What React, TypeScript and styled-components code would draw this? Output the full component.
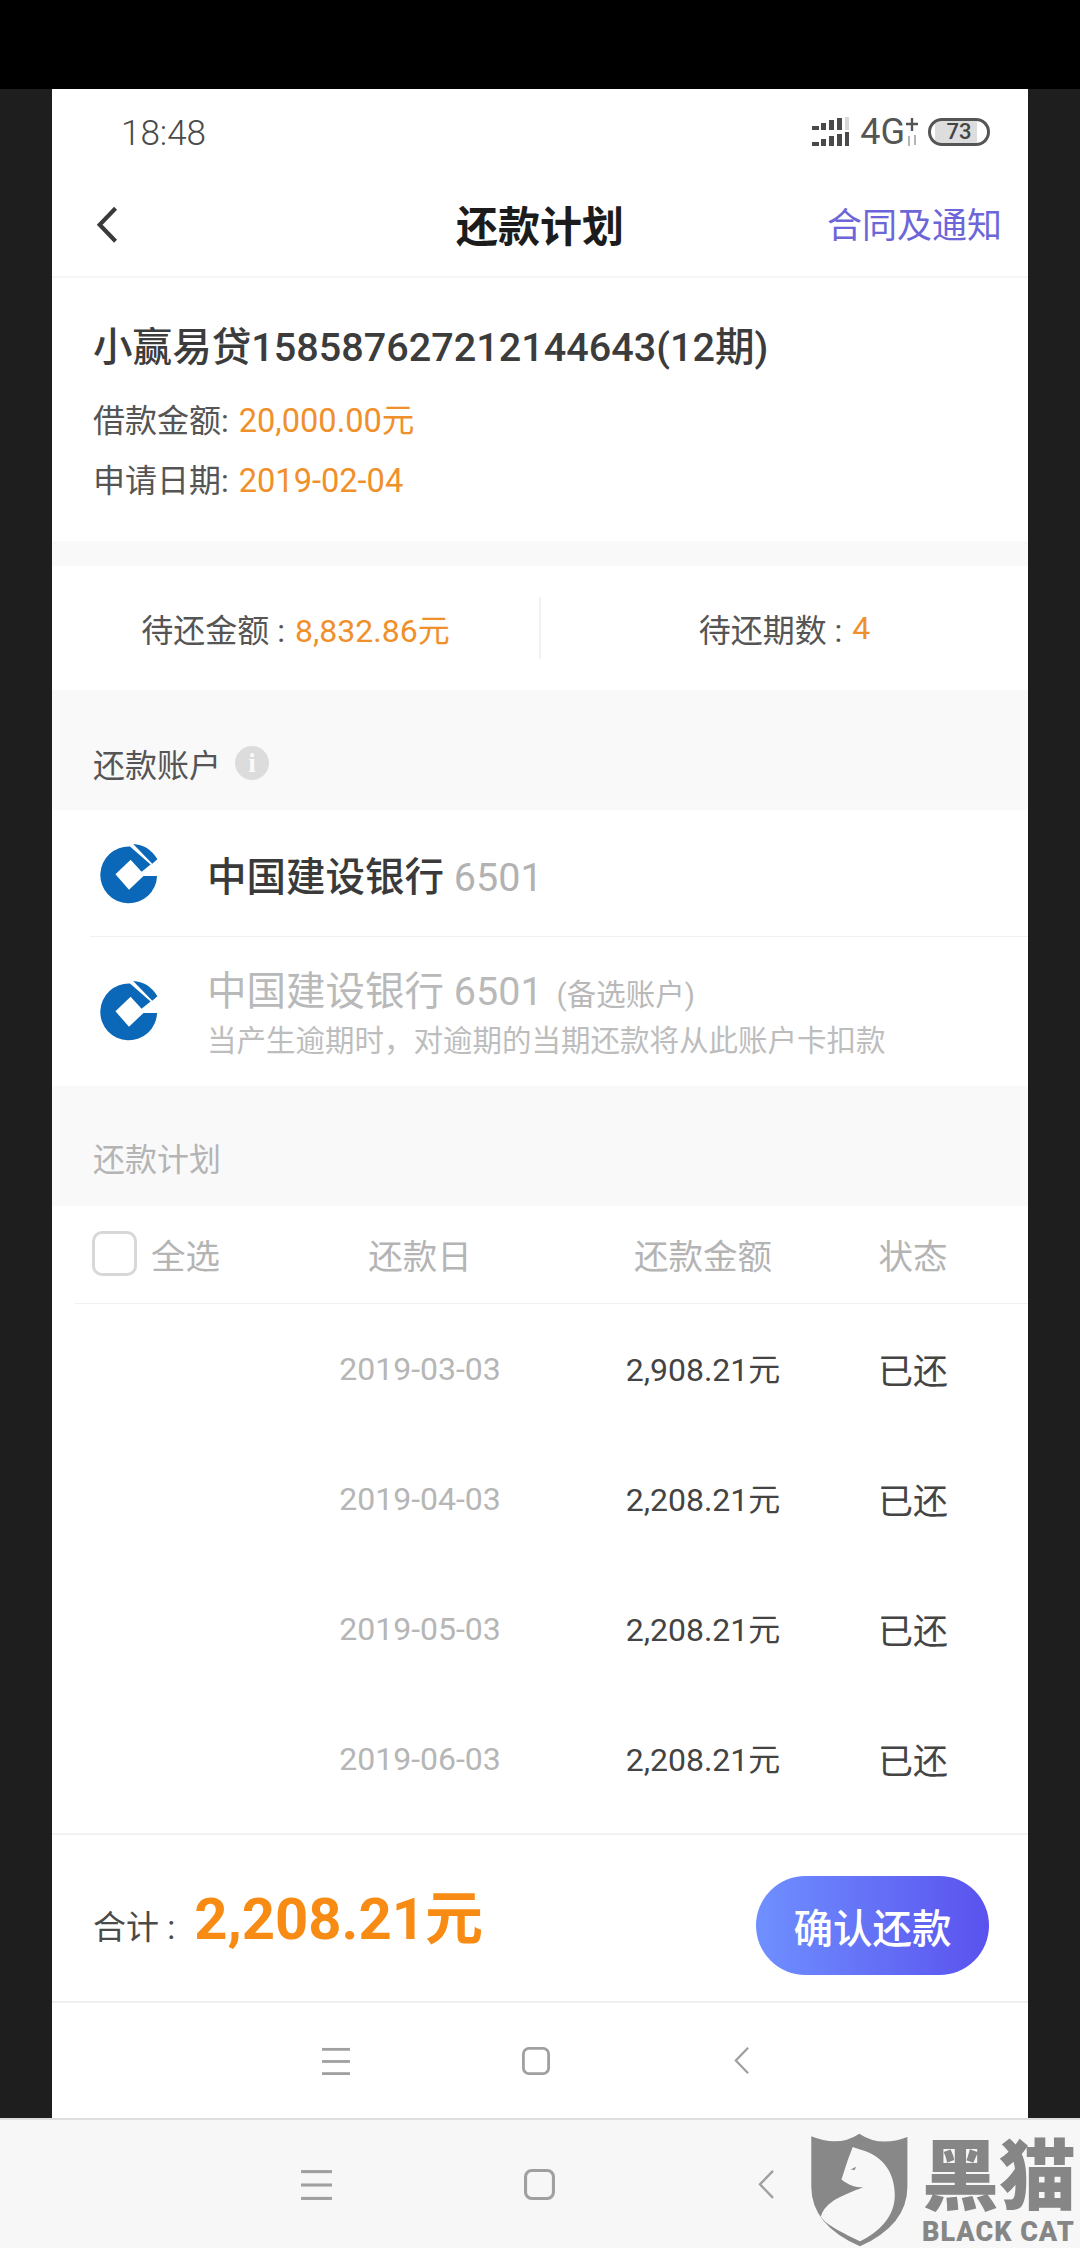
import React from "react";
import styled, { createGlobalStyle } from "styled-components";

const GlobalStyle = createGlobalStyle`
  html, body {
    margin: 0;
    padding: 0;
    background: #000000;
  }
  * {
    box-sizing: border-box;
  }
  body {
    font-family: Roboto, "Noto Sans CJK SC", sans-serif;
  }
`;

const Page = styled.div`
  width: 1080px;
  height: 2248px;
  position: relative;
  overflow: hidden;
  display: flex;
  flex-direction: column;
`;

const TopBlack = styled.div`
  height: 89px;
  background: #000000;
`;

const Middle = styled.div`
  height: 2029px;
  display: flex;
  background: #1e1e1e;
  padding: 0 52px;
`;

const Screen = styled.div`
  width: 976px;
  background: #ffffff;
  display: flex;
  flex-direction: column;
`;

const StatusBar = styled.div`
  height: 86px;
  padding: 0 38px 0 69px;
  display: flex;
  align-items: center;
  justify-content: space-between;
  color: #4a4a4a;
`;

const Time = styled.span`
  font-size: 35px;
  font-weight: 300;
  margin-top: 3px;
`;

const StatusIcons = styled.div`
  display: flex;
  align-items: center;
`;

const Net = styled.span`
  font-size: 36px;
  font-weight: 400;
  margin-left: 10px;
  color: #555555;
`;

const Battery = styled.span`
  width: 62px;
  height: 28px;
  margin-left: 9px;
  border: 3px solid #555555;
  border-radius: 14px;
  font-size: 22px;
  font-weight: 500;
  line-height: 22px;
  text-align: center;
  color: #444444;
  background: linear-gradient(90deg, #ffffff 8%, #dddddd 8%, #dddddd 82%, #ffffff 82%);
`;

const NavBar = styled.div`
  height: 103px;
  position: relative;
  display: flex;
  align-items: center;
  justify-content: center;
  padding-bottom: 5px;
  border-bottom: 2px solid #f6f6f6;
`;

const BackButton = styled.div`
  position: absolute;
  left: 44px;
  top: 31px;
  display: flex;
`;

const NavTitle = styled.h1`
  margin: 0;
  font-size: 42px;
  font-weight: 700;
  color: #1c1c1c;
`;

const NavLink = styled.a`
  position: absolute;
  right: 26px;
  top: 22px;
  font-size: 35px;
  color: #6d66d9;
`;

const LoanCard = styled.div`
  height: 263px;
  padding: 44px 41px 0;
  display: flex;
  flex-direction: column;
`;

const LoanTitle = styled.div`
  font-size: 39.6px;
  font-weight: 500;
  line-height: 52px;
  color: #3c3c3c;
  margin-bottom: 17px;
`;

const LoanLine = styled.div`
  font-size: 32px;
  line-height: 60px;
  color: #555555;
`;

const Orange = styled.span`
  font-size: 32.6px;
  margin-left: 2px;
  color: #f0902a;
`;

const StatValue = styled(Orange)`
  font-size: 32px;
  margin-left: 10px;
`;

const Stats = styled.div`
  height: 124px;
  display: flex;
  align-items: center;
`;

const Stat = styled.div<{ $bordered?: boolean }>`
  flex: 1;
  height: 62px;
  display: flex;
  align-items: center;
  justify-content: center;
  font-size: 32px;
  color: #555555;
  border-right: ${(p) => (p.$bordered ? "2px solid #f2f2f2" : "none")};
`;

const GreyBand = styled.div<{ $height: number; $muted?: boolean; $pad?: number }>`
  height: ${(p) => p.$height}px;
  background: #f9f9f9;
  padding: 0 0 ${(p) => p.$pad ?? 0}px 41px;
  display: flex;
  align-items: flex-end;
  font-size: 32px;
  color: ${(p) => (p.$muted ? "#b4b4b4" : "#555555")};
`;

const BandLabel = styled.div`
  display: flex;
  align-items: center;
  height: 72px;
  gap: 14px;
`;

const InfoDot = styled.span`
  width: 34px;
  height: 34px;
  border-radius: 50%;
  background: #dcdcdc;
  color: #fafafa;
  font-size: 27px;
  font-weight: 700;
  font-family: "Liberation Serif", serif;
  text-align: center;
  line-height: 34px;
`;

const AccountRow = styled.div<{ $height: number; $pad?: number }>`
  height: ${(p) => p.$height}px;
  display: flex;
  align-items: center;
  padding: 0 0 ${(p) => p.$pad ?? 0}px 47px;
  gap: 48px;
`;

const AccountName = styled.div`
  font-size: 39.5px;
  font-weight: 500;
  color: #3a3a3a;
`;

const AccountNo = styled.span`
  font-weight: 400;
  color: #b2b2b2;
`;

const AccountText = styled.div`
  display: flex;
  flex-direction: column;
  margin-top: 10px;
`;

const AltName = styled.div`
  font-size: 39.5px;
  line-height: 50px;
  color: #b9b9b9;
`;

const AltTag = styled.span`
  font-size: 29.5px;
  margin-left: 14px;
`;

const AltNote = styled.div`
  font-size: 29.5px;
  line-height: 42px;
  color: #bdbdbd;
`;

const Separator = styled.div`
  height: 1px;
  margin-left: 38px;
  background: #f0f0f0;
`;

const Grid = styled.div`
  display: grid;
  grid-template-columns: 255px 226px 340px 80px 75px;
  align-items: center;
  justify-items: center;
  white-space: nowrap;
`;

const TableHead = styled(Grid)`
  height: 98px;
  margin-left: 23px;
  padding-bottom: 3px;
  grid-template-columns: 232px 226px 340px 80px 75px;
  font-size: 34.5px;
  color: #b4b4b4;
  box-shadow: inset 0 -1px 0 #f0f0f0;
`;

const SelectAll = styled.label`
  justify-self: start;
  display: flex;
  align-items: center;
  gap: 14px;
  padding-left: 17px;
`;

const CheckBox = styled.span`
  width: 45px;
  height: 45px;
  border: 3px solid #d8d8d8;
  border-radius: 10px;
`;

const TableBody = styled.div`
  height: 531px;
  display: flex;
  flex-direction: column;
  padding-bottom: 8px;
  border-bottom: 2px solid #f2f2f2;
`;

const PlanRow = styled(Grid)`
  height: 130px;
  font-size: 32px;
`;

const DateCell = styled.span`
  grid-column: 2;
  color: #b6b6b6;
`;

const AmountCell = styled.span`
  color: #444444;
  padding-bottom: 4px;
`;

const StateCell = styled.span`
  font-size: 35px;
  color: #444444;
  padding-bottom: 2px;
`;

const Footer = styled.div`
  height: 168px;
  padding: 0 39px 8px 41px;
  display: flex;
  align-items: center;
  justify-content: space-between;
  border-bottom: 2px solid #efefef;
`;

const Total = styled.div`
  display: flex;
  align-items: baseline;
  font-size: 33px;
  color: #4a4a4a;
`;

const TotalValue = styled.span`
  font-size: 58px;
  font-weight: 700;
  color: #f78b13;
  margin-left: 19px;
`;

const ConfirmButton = styled.button`
  width: 233px;
  height: 99px;
  margin-top: 22px;
  border: 0;
  border-radius: 50px;
  padding: 0;
  font-family: inherit;
  font-size: 39.5px;
  font-weight: 500;
  color: #ffffff;
  background: linear-gradient(90deg, #6f90ff, #5a52ee);
`;

const InnerNav = styled.div`
  flex: 1;
  display: flex;
  align-items: center;
  padding: 0 0 0 270px;
  gap: 172px;
`;

const InnerBack = styled.span`
  display: flex;
  margin-left: 11px;
`;

const BottomNav = styled.div`
  flex: 1;
  background: #f7f7f7;
  border-top: 2px solid #dedede;
  display: flex;
  align-items: center;
  padding-left: 301px;
  gap: 192px;
`;

const BottomBack = styled.span`
  display: flex;
  margin-left: 10px;
`;

const Watermark = styled.div`
  position: absolute;
  left: 810px;
  top: 2132px;
  width: 270px;
  height: 116px;
  display: flex;
  gap: 12px;
  color: #868686;
`;

const MarkText = styled.div`
  display: flex;
  flex-direction: column;
  align-items: flex-start;
  padding-top: 6px;
`;

const MarkCn = styled.div`
  font-size: 77px;
  font-weight: 900;
  line-height: 80px;
`;

const MarkEn = styled.div`
  font-family: Roboto, sans-serif;
  font-size: 27px;
  font-weight: 900;
  letter-spacing: 1px;
  line-height: 24px;
  margin-top: 2px;
  white-space: nowrap;
`;

function BankLogo() {
  return (
    <svg width="60" height="62" viewBox="52 60 186 192">
      <path
        d="M148 74A88 88 0 1 0 232 165L190 165L145 208L103 160L150 115L184 152L212 130Z"
        fill="#0b67b8"
      />
      <path d="M158 66Q205 68 233 113L217 127Z" fill="#0b67b8" />
    </svg>
  );
}

function SignalIcon() {
  return (
    <svg width="38" height="30" viewBox="0 0 38 30" fill="#4a4a4a">
      <rect x="0" y="9" width="7" height="4" />
      <rect x="9" y="6" width="5" height="7" />
      <rect x="17" y="3" width="5" height="10" />
      <rect x="25" y="1" width="5" height="12" />
      <rect x="33" y="0" width="4" height="13" fill="#d8d8d8" />
      <rect x="0" y="25" width="7" height="4" />
      <rect x="9" y="22" width="5" height="7" />
      <rect x="17" y="19" width="5" height="10" />
      <rect x="25" y="17" width="5" height="12" />
      <rect x="33" y="15" width="4" height="14" />
    </svg>
  );
}

function NetArrows() {
  return (
    <svg width="14" height="32" viewBox="0 0 14 32">
      <path d="M7 2V15M1 8H13" stroke="#555555" strokeWidth="2.4" />
      <path d="M4 20V30M10 19V29" stroke="#b5b5b5" strokeWidth="2" />
    </svg>
  );
}

function MenuIcon({ w }: { w: number }) {
  return (
    <svg width={w} height={w + 2} viewBox="0 0 30 32" fill="#a0a0a0">
      <rect x="0" y="2" width="30" height="3" />
      <rect x="0" y="15" width="30" height="3" />
      <rect x="0" y="28" width="30" height="3" />
    </svg>
  );
}

function SquareIcon({ w }: { w: number }) {
  return (
    <svg width={w} height={w} viewBox="0 0 30 30" fill="none">
      <rect x="1.5" y="1.5" width="27" height="27" rx="6" stroke="#a0a0a0" strokeWidth="3" />
    </svg>
  );
}

function ChevronIcon({ w, color, sw }: { w: number; color: string; sw: number }) {
  return (
    <svg width={w} height={w * 1.7} viewBox="0 0 18 30" fill="none">
      <path d="M16 1.5L3 15L16 28.5" stroke={color} strokeWidth={sw} />
    </svg>
  );
}

function CatShield() {
  return (
    <svg width="100" height="116" viewBox="90 65 300 350">
      <path
        d="M93 78Q175 112 238 70Q300 112 383 80L383 230Q383 345 240 410Q93 345 93 230Z"
        fill="#888888"
      />
      <path
        d="M218 110L240 118C310 135 345 190 345 255C345 320 300 365 240 395C190 370 135 345 122 320C135 275 190 255 250 232C225 232 205 225 184 208L203 150Z"
        fill="#f7f7f7"
      />
      <path d="M212 178L228 170L224 180Z" fill="#888888" />
    </svg>
  );
}

const plan = [
  { date: "2019-03-03", amount: "2,908.21元" },
  { date: "2019-04-03", amount: "2,208.21元" },
  { date: "2019-05-03", amount: "2,208.21元" },
  { date: "2019-06-03", amount: "2,208.21元" },
];

export default function App() {
  return (
    <Page>
      <GlobalStyle />
      <TopBlack />
      <Middle>
        <Screen>
          <StatusBar>
            <Time>18:48</Time>
            <StatusIcons>
              <SignalIcon />
              <Net>4G</Net>
              <NetArrows />
              <Battery>73</Battery>
            </StatusIcons>
          </StatusBar>
          <NavBar>
            <BackButton>
              <ChevronIcon w={22} color="#3a3a3a" sw={3.4} />
            </BackButton>
            <NavTitle>还款计划</NavTitle>
            <NavLink>合同及通知</NavLink>
          </NavBar>
          <LoanCard>
            <LoanTitle>小赢易贷158587627212144643(12期)</LoanTitle>
            <LoanLine>
              借款金额: <Orange>20,000.00元</Orange>
            </LoanLine>
            <LoanLine>
              申请日期: <Orange>2019-02-04</Orange>
            </LoanLine>
          </LoanCard>
          <GreyBand $height={25} />
          <Stats>
            <Stat $bordered>
              待还金额 :<StatValue>8,832.86元</StatValue>
            </Stat>
            <Stat>
              待还期数 :<StatValue>4</StatValue>
            </Stat>
          </Stats>
          <GreyBand $height={120} $pad={11}>
            <BandLabel>
              还款账户
              <InfoDot>i</InfoDot>
            </BandLabel>
          </GreyBand>
          <AccountRow $height={126}>
            <BankLogo />
            <AccountName>
              中国建设银行 <AccountNo>6501</AccountNo>
            </AccountName>
          </AccountRow>
          <Separator />
          <AccountRow $height={149} $pad={4}>
            <BankLogo />
            <AccountText>
              <AltName>
                中国建设银行 6501<AltTag>(备选账户)</AltTag>
              </AltName>
              <AltNote>当产生逾期时，对逾期的当期还款将从此账户卡扣款</AltNote>
            </AccountText>
          </AccountRow>
          <GreyBand $height={120} $muted $pad={13}>
            <BandLabel>还款计划</BandLabel>
          </GreyBand>
          <TableHead>
            <SelectAll>
              <CheckBox />
              全选
            </SelectAll>
            <span>还款日</span>
            <span>还款金额</span>
            <span>状态</span>
          </TableHead>
          <TableBody>
            {plan.map((row) => (
              <PlanRow key={row.date}>
                <DateCell>{row.date}</DateCell>
                <AmountCell>{row.amount}</AmountCell>
                <StateCell>已还</StateCell>
              </PlanRow>
            ))}
          </TableBody>
          <Footer>
            <Total>
              合计 :<TotalValue>2,208.21元</TotalValue>
            </Total>
            <ConfirmButton>确认还款</ConfirmButton>
          </Footer>
          <InnerNav>
            <MenuIcon w={28} />
            <SquareIcon w={28} />
            <InnerBack>
              <ChevronIcon w={17} color="#a0a0a0" sw={2.4} />
            </InnerBack>
          </InnerNav>
        </Screen>
      </Middle>
      <BottomNav>
        <MenuIcon w={31} />
        <SquareIcon w={31} />
        <BottomBack>
          <ChevronIcon w={18} color="#a0a0a0" sw={2.4} />
        </BottomBack>
      </BottomNav>
      <Watermark>
        <CatShield />
        <MarkText>
          <MarkCn>黑猫</MarkCn>
          <MarkEn>BLACK CAT</MarkEn>
        </MarkText>
      </Watermark>
    </Page>
  );
}
